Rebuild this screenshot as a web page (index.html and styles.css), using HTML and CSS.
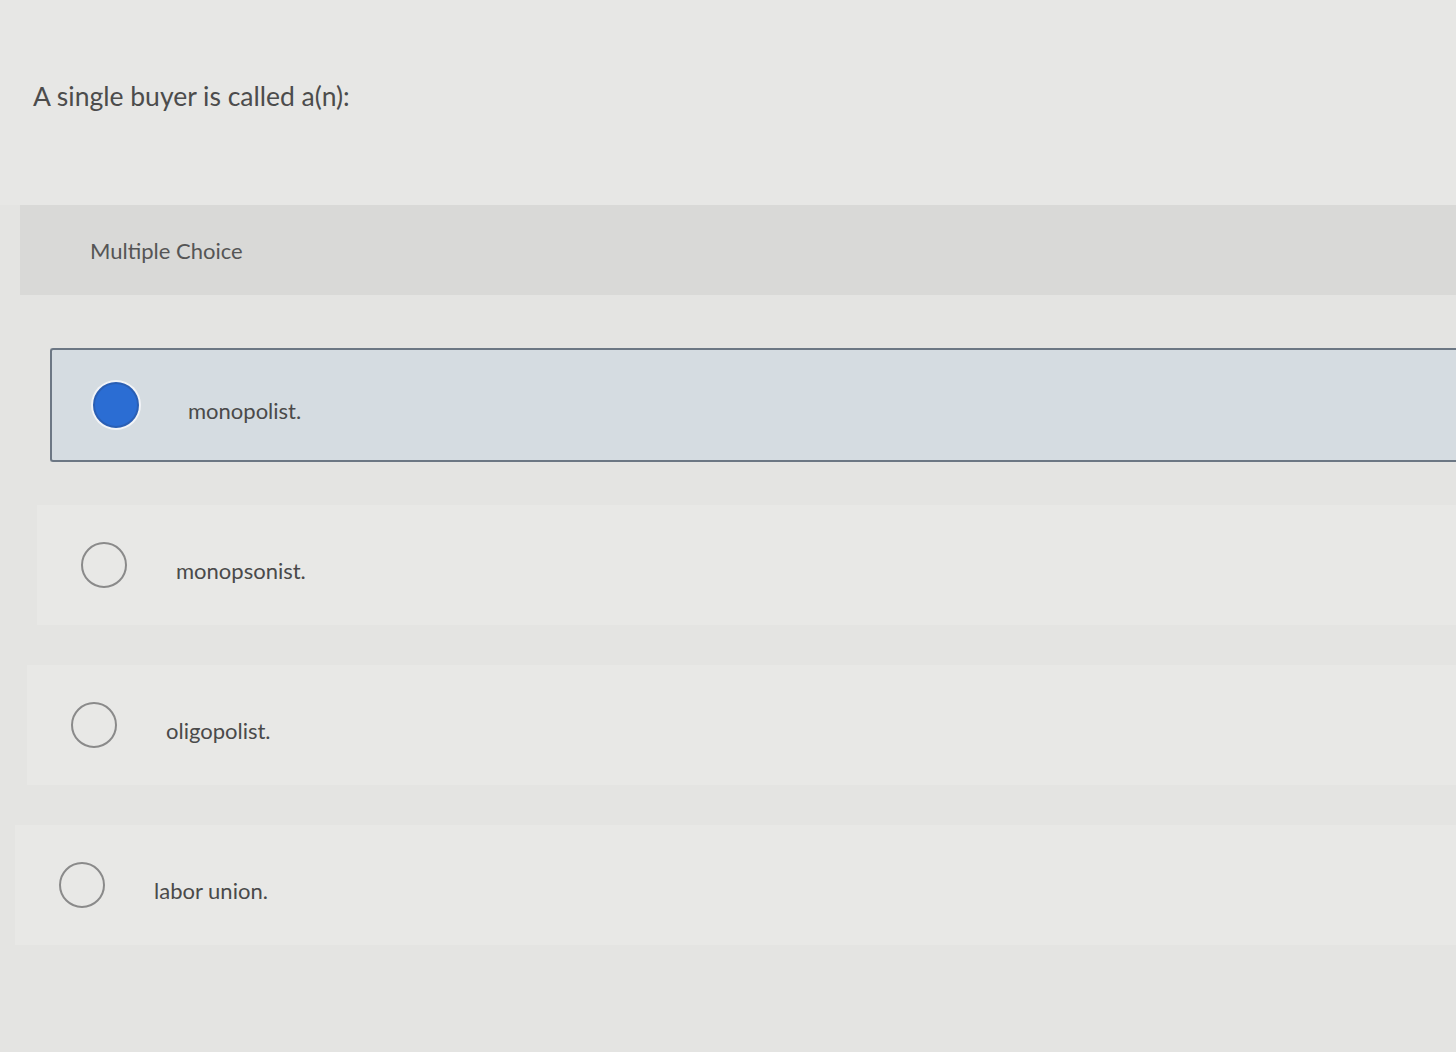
FILE: index.html
```html
<!DOCTYPE html>
<html lang="en">
<head>
  <meta charset="UTF-8">
  <meta name="viewport" content="width=device-width, initial-scale=1.0">
  <link rel="stylesheet" href="styles.css">
</head>
<body>

  <div class="question">
    <p class="prompt">A single buyer is called a(n):</p>
  </div>

  <div class="choice-head">Multiple Choice</div>

  <form class="options">
    <label class="option selected">
      <input type="radio" name="answer" value="a" checked>
      <span class="dot"></span>
      <span class="text">monopolist.</span>
    </label>
    <label class="option">
      <input type="radio" name="answer" value="b">
      <span class="dot"></span>
      <span class="text">monopsonist.</span>
    </label>
    <label class="option">
      <input type="radio" name="answer" value="c">
      <span class="dot"></span>
      <span class="text">oligopolist.</span>
    </label>
    <label class="option">
      <input type="radio" name="answer" value="d">
      <span class="dot"></span>
      <span class="text">labor union.</span>
    </label>
  </form>

</body>
</html>
```

FILE: styles.css
```css
body {
  font-family: Lato, "Open Sans", sans-serif;
  background-color: #e4e4e2;
  color: #4c4c4c;
  margin: 0;
  min-height: 100vh;
}

.question {
  background-color: #e7e7e5;
  height: 205px;
  padding-left: 33px;
  box-sizing: border-box;
  padding-top: 78px;
}

.prompt {
  margin: 0;
  font-size: 26.5px;
  line-height: 36px;
}

.choice-head {
  margin-left: 20px;
  height: 90px;
  background-color: #d9d9d7;
  padding-left: 70px;
  display: flex;
  align-items: center;
  font-size: 22px;
  color: #555;
}

.options {
  padding-top: 53px;
  padding-bottom: 100px;
  display: flex;
  flex-direction: column;
  gap: 40px;
}

.option {
  display: flex;
  align-items: center;
  height: 120px;
  padding-left: 44px;
  background-color: #e8e8e6;
  box-sizing: border-box;
  cursor: pointer;
}

.option input {
  display: none;
}

/* rows drift a little to the left as they go down */
.option:nth-child(1) { margin-left: 50px; padding-left: 41px; }
.option:nth-child(2) { margin-left: 37px; }
.option:nth-child(3) { margin-left: 27px; }
.option:nth-child(4) { margin-left: 15px; }

.option.selected {
  height: 114px;
  margin-bottom: 3px;
  background-color: #d5dce1;
  border: 2px solid #6c7784;
  border-right: none;
  border-radius: 3px 0 0 3px;
}

.dot {
  width: 46px;
  height: 46px;
  border-radius: 50%;
  border: 2px solid #8a8a8a;
  box-sizing: border-box;
  flex-shrink: 0;
  margin-right: 49px;
}

.option.selected .dot {
  background-color: #2b6dd3;
  border-color: #2a5fb4;
  box-shadow: 0 0 0 2px #f2f4f7;
}

.text {
  font-size: 22px;
  color: #4a4a4a;
  padding-top: 10px;
}
```
